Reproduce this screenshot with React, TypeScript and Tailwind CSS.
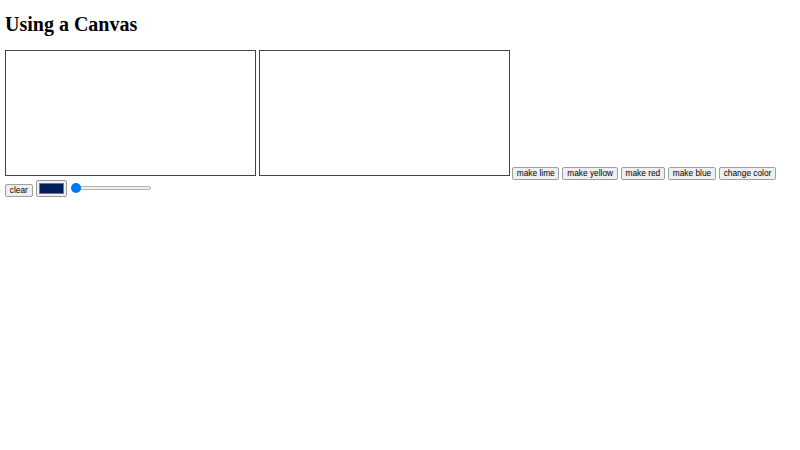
const buttons = ["make lime", "make yellow", "make red", "make blue", "change color"];

function Btn({ label }: { label: string }) {
  return (
    <button className="rounded-[2px] border border-[#a0a0a0] bg-[#efefef] px-[3.75px] py-[1px] font-['Liberation_Sans',Arial,sans-serif] text-[8.33px] leading-[9.5px] text-black">
      {label}
    </button>
  );
}

function Canvas() {
  return <div className="h-[126px] w-[251px] shrink-0 border border-[#444] bg-white" />;
}

export default function App() {
  return (
    <div className="min-h-[450px] bg-white px-[5px] font-['Liberation_Serif',serif] text-[10px] text-black">
      <h1 className="mt-[13.4px] mb-[13.4px] text-[20px] font-bold leading-[23px]">Using a Canvas</h1>

      <div className="flex items-baseline gap-[2.5px]">
        <Canvas />
        <Canvas />
        <div className="flex items-baseline gap-[3px]">
          {buttons.map((b) => (
            <Btn key={b} label={b} />
          ))}
        </div>
      </div>

      <div className="flex items-end gap-[3px]">
        <Btn label="clear" />
        <div className="flex h-[17px] w-[31px] items-center justify-center rounded-[2px] border border-[#9a9a9a] bg-[#efefef]">
          <div className="h-[11px] w-[25px] border border-[#777] bg-[#001e5e]" />
        </div>
        <div className="relative mb-[4px] ml-[1px] flex h-[10px] w-[80px] items-center">
          <div className="h-[4px] w-full rounded-full border border-[#b5b5b5] bg-[#efefef]" />
          <div className="absolute left-0 top-0 h-[10px] w-[10px] rounded-full bg-[#0075ff]" />
        </div>
      </div>
    </div>
  );
}
